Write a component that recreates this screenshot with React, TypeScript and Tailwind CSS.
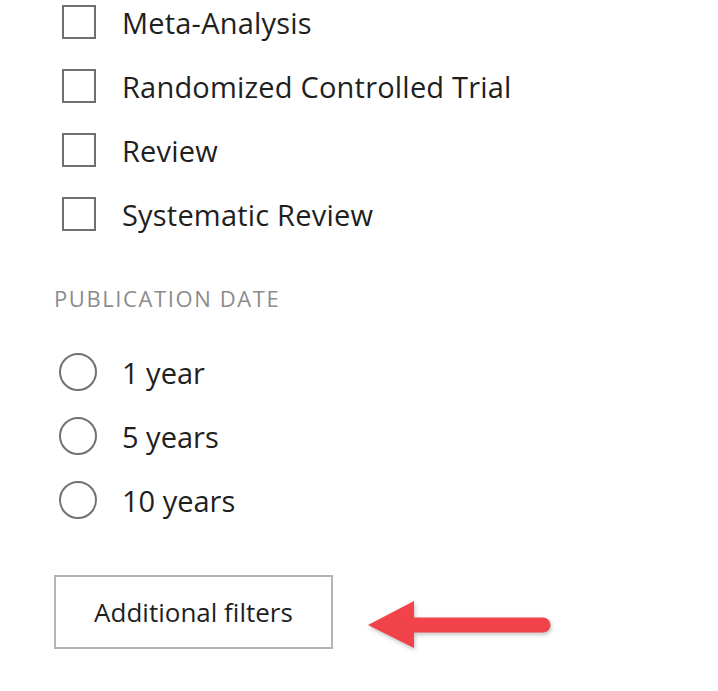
import React from 'react';

const studyTypes = ['Meta-Analysis', 'Randomized Controlled Trial', 'Review', 'Systematic Review'];
const dateRanges = ['1 year', '5 years', '10 years'];

export default function App() {
  return (
    <div
      className="min-h-screen bg-white pl-[54px] pt-[5px] text-[#1f1f1f]"
      style={{ fontFamily: '"Open Sans", "Noto Sans", sans-serif' }}
    >
      {/* Article type checkboxes */}
      <ul className="flex flex-col gap-[30px]">
        {studyTypes.map((label) => (
          <li key={label} className="flex h-[34px] items-center">
            <span className="ml-[8px] h-[34px] w-[34px] shrink-0 border-2 border-[#707070]" />
            <span className="ml-[26px] text-[29px] leading-none tracking-[0.2px]">{label}</span>
          </li>
        ))}
      </ul>

      {/* Publication date */}
      <h3 className="mt-[56px] text-[22px] leading-none tracking-[1.6px] text-[#8c8c8c]">
        PUBLICATION DATE
      </h3>
      <ul className="mt-[44px] flex flex-col gap-[26px]">
        {dateRanges.map((label) => (
          <li key={label} className="flex h-[38px] items-center">
            <span className="ml-[5px] h-[38px] w-[38px] shrink-0 rounded-full border-2 border-[#707070]" />
            <span className="ml-[25px] text-[29px] leading-none">{label}</span>
          </li>
        ))}
      </ul>

      {/* Additional filters + annotation arrow */}
      <div className="mt-[56px] flex items-start">
        <button className="flex h-[74px] w-[279px] items-center justify-center border-2 border-[#b4b4b8] bg-white text-[26px] text-[#1f1f1f]">
          Additional filters
        </button>
        <svg
          width="190"
          height="52"
          viewBox="0 0 190 52"
          className="ml-[35px] mt-[23px] drop-shadow-[1px_2px_2px_rgba(0,0,0,0.25)]"
        >
          <line x1="40" y1="27" x2="175" y2="27" stroke="#f2424a" strokeWidth="15" strokeLinecap="round" />
          <polygon points="0,27 46,3 46,50" fill="#f2424a" />
        </svg>
      </div>
    </div>
  );
}
